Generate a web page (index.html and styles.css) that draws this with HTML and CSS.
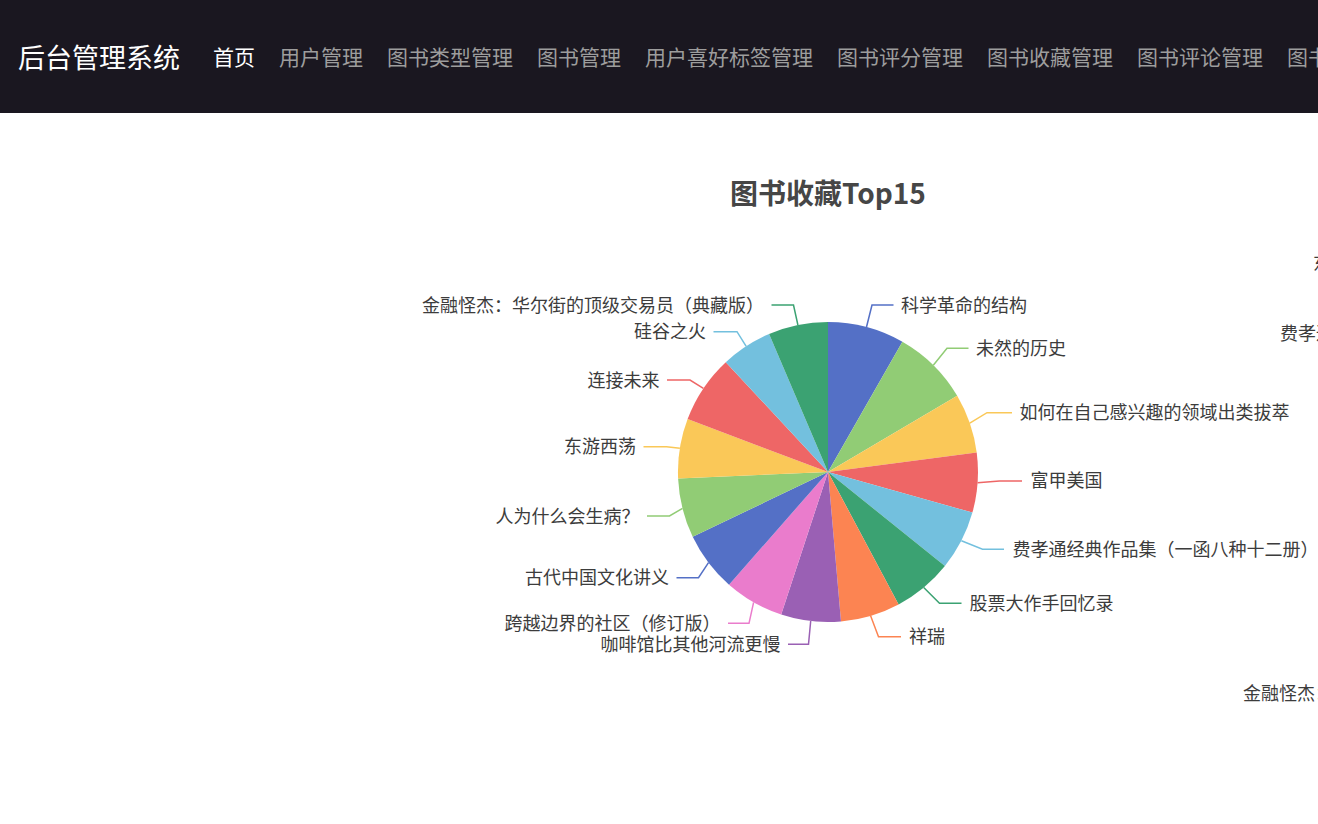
FILE: index.html
```html
<!DOCTYPE html>
<html lang="zh-CN">
<head>
<meta charset="utf-8">
<title>后台管理系统</title>
<link rel="stylesheet" href="styles.css">
</head>
<body>
<header class="navbar">
  <div class="brand">后台管理系统</div>
  <ul class="nav">
    <li class="nav-item active">首页</li>
    <li class="nav-item">用户管理</li>
    <li class="nav-item">图书类型管理</li>
    <li class="nav-item">图书管理</li>
    <li class="nav-item">用户喜好标签管理</li>
    <li class="nav-item">图书评分管理</li>
    <li class="nav-item">图书收藏管理</li>
    <li class="nav-item">图书评论管理</li>
    <li class="nav-item">图书推荐管理</li>
  </ul>
</header>
<main class="content">
  <svg class="chart" width="1318" height="711" viewBox="0 113 1318 711" xmlns="http://www.w3.org/2000/svg">
    <text class="chart-title" x="828" y="191.5" text-anchor="middle" dominant-baseline="central">图书收藏Top15</text>
    <g class="pie">
      <path fill="#5470c6" d="M828 472 L828 322 A150 150 0 0 1 902.4 341.7 Z"/>
      <path fill="#91cc75" d="M828 472 L902.4 341.7 A150 150 0 0 1 957.2 395.8 Z"/>
      <path fill="#fac858" d="M828 472 L957.2 395.8 A150 150 0 0 1 976.7 452.6 Z"/>
      <path fill="#ee6666" d="M828 472 L976.7 452.6 A150 150 0 0 1 972.4 512.6 Z"/>
      <path fill="#73c0de" d="M828 472 L972.4 512.6 A150 150 0 0 1 944.9 566.0 Z"/>
      <path fill="#3ba272" d="M828 472 L944.9 566.0 A150 150 0 0 1 898.6 604.4 Z"/>
      <path fill="#fc8452" d="M828 472 L898.6 604.4 A150 150 0 0 1 841.0 621.4 Z"/>
      <path fill="#9a60b4" d="M828 472 L841.0 621.4 A150 150 0 0 1 781.2 614.5 Z"/>
      <path fill="#ea7ccc" d="M828 472 L781.2 614.5 A150 150 0 0 1 729.0 584.7 Z"/>
      <path fill="#5470c6" d="M828 472 L729.0 584.7 A150 150 0 0 1 692.7 536.8 Z"/>
      <path fill="#91cc75" d="M828 472 L692.7 536.8 A150 150 0 0 1 678.1 478.5 Z"/>
      <path fill="#fac858" d="M828 472 L678.1 478.5 A150 150 0 0 1 687.6 419.1 Z"/>
      <path fill="#ee6666" d="M828 472 L687.6 419.1 A150 150 0 0 1 725.8 362.2 Z"/>
      <path fill="#73c0de" d="M828 472 L725.8 362.2 A150 150 0 0 1 769.1 334.0 Z"/>
      <path fill="#3ba272" d="M828 472 L769.1 334.0 A150 150 0 0 1 828 322 Z"/>
    </g>
    <g class="leaders">
      <path class="leader" stroke="#5470c6" d="M866.5 327 L872 305 L893.5 305"/>
      <path class="leader" stroke="#91cc75" d="M933.3 365.2 L947 348.3 L968.5 348.3"/>
      <path class="leader" stroke="#fac858" d="M969.8 423.2 L987 412.7 L1012 412.7"/>
      <path class="leader" stroke="#ee6666" d="M977.6 482.8 L999.5 481 L1022 481"/>
      <path class="leader" stroke="#73c0de" d="M961.4 540.7 L982.5 549.3 L1004 549.3"/>
      <path class="leader" stroke="#3ba272" d="M923.7 587.5 L939.5 603.3 L961.5 603.3"/>
      <path class="leader" stroke="#fc8452" d="M870.6 615.8 L878.5 636.7 L901 636.7"/>
      <path class="leader" stroke="#9a60b4" d="M810.7 621 L808.5 644.3 L788 644.3"/>
      <path class="leader" stroke="#ea7ccc" d="M753.6 602.3 L749 623.3 L728 623.3"/>
      <path class="leader" stroke="#5470c6" d="M708.5 562.6 L698.5 577.7 L676.5 577.7"/>
      <path class="leader" stroke="#91cc75" d="M682.5 508.4 L669.5 516 L647 516"/>
      <path class="leader" stroke="#fac858" d="M679.9 448.3 L666.5 446.7 L643.5 446.7"/>
      <path class="leader" stroke="#ee6666" d="M703.4 388.4 L690 380 L667 380"/>
      <path class="leader" stroke="#73c0de" d="M746.2 346.3 L737 331.7 L713.5 331.7"/>
      <path class="leader" stroke="#3ba272" d="M797.9 325 L793.5 305 L771.5 305"/>
    </g>
    <g class="labels">
      <text class="label" x="901" y="303.5" dominant-baseline="central">科学革命的结构</text>
      <text class="label" x="976" y="346.8" dominant-baseline="central">未然的历史</text>
      <text class="label" x="1019.5" y="411.2" dominant-baseline="central">如何在自己感兴趣的领域出类拔萃</text>
      <text class="label" x="1030.5" y="479" dominant-baseline="central">富甲美国</text>
      <text class="label" x="1012.5" y="547.8" dominant-baseline="central">费孝通经典作品集（一函八种十二册）</text>
      <text class="label" x="969.5" y="601.8" dominant-baseline="central">股票大作手回忆录</text>
      <text class="label" x="909" y="635.2" dominant-baseline="central">祥瑞</text>
      <text class="label" x="780.5" y="642.8" text-anchor="end" dominant-baseline="central">咖啡馆比其他河流更慢</text>
      <text class="label" x="720.5" y="621.8" text-anchor="end" dominant-baseline="central">跨越边界的社区（修订版）</text>
      <text class="label" x="669" y="576.2" text-anchor="end" dominant-baseline="central">古代中国文化讲义</text>
      <text class="label" x="639.5" y="514.5" text-anchor="end" dominant-baseline="central">人为什么会生病？</text>
      <text class="label" x="636" y="445.2" text-anchor="end" dominant-baseline="central">东游西荡</text>
      <text class="label" x="659.5" y="378.5" text-anchor="end" dominant-baseline="central">连接未来</text>
      <text class="label" x="706" y="330.2" text-anchor="end" dominant-baseline="central">硅谷之火</text>
      <text class="label" x="764" y="303.5" text-anchor="end" dominant-baseline="central">金融怪杰：华尔街的顶级交易员（典藏版）</text>
    </g>
    <g class="labels next-chart">
      <text class="label" x="1313" y="261.5" dominant-baseline="central">东游西荡</text>
      <text class="label" x="1280" y="331.5" dominant-baseline="central">费孝通经典作品集（一函八种十二册）</text>
      <text class="label" x="1243" y="691.5" dominant-baseline="central">金融怪杰：华尔街的顶级交易员（典藏版）</text>
    </g>
  </svg>
</main>
</body>
</html>
```

FILE: styles.css
```css
* {
  box-sizing: border-box;
}

html,
body {
  margin: 0;
  padding: 0;
  overflow: hidden;
}

body {
  width: 1318px;
  height: 824px;
  background: #ffffff;
  font-family: "Noto Sans CJK SC", "Microsoft YaHei", sans-serif;
}

.navbar {
  height: 113px;
  background: #1a1720;
  display: flex;
  align-items: center;
  padding-left: 18px;
  white-space: nowrap;
  overflow: hidden;
}

.brand {
  flex-shrink: 0;
  font-size: 27px;
  line-height: 1;
  color: #ffffff;
  margin-right: 21px;
}

.nav {
  display: flex;
  list-style: none;
  margin: 0;
  padding: 0;
  flex-shrink: 0;
}

.nav-item {
  flex-shrink: 0;
  padding: 0 12px;
  font-size: 21px;
  line-height: 1;
  color: #9d9d9d;
}

.nav-item.active {
  color: #ffffff;
}

.content {
  height: 711px;
}

.chart {
  display: block;
  font-family: "Noto Sans CJK SC", "Microsoft YaHei", sans-serif;
}

.chart-title {
  font-size: 28px;
  font-weight: 700;
  fill: #464646;
}

.label {
  font-size: 18px;
  fill: #3c3c3c;
}

.leader {
  fill: none;
  stroke-width: 1.5;
}
```
